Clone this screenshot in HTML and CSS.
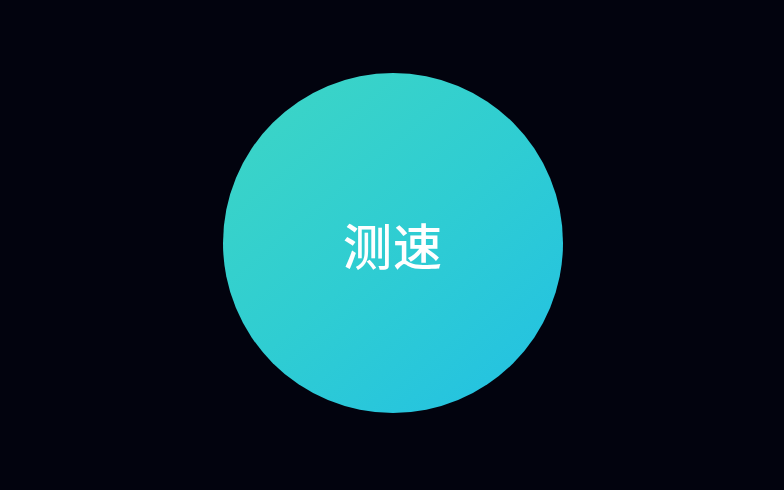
FILE: index.html
```html
<!DOCTYPE html>
<html lang="zh">
<head>
<meta charset="utf-8">
<title>测速</title>
<link rel="stylesheet" href="styles.css">
</head>
<body>
<main class="stage">
  <button class="speed-btn" type="button">测速</button>
</main>
</body>
</html>
```

FILE: styles.css
```css
html, body {
  margin: 0;
  padding: 0;
  background: #02030e;
}
.stage {
  width: 784px;
  height: 490px;
  display: flex;
  align-items: center;
  justify-content: center;
  padding: 0 0 4px 2px;
  box-sizing: border-box;
}
.speed-btn {
  width: 340px;
  height: 340px;
  border: none;
  border-radius: 50%;
  background: linear-gradient(140deg, #3ed6c4 0%, #2fcdd2 50%, #22c0e4 100%);
  color: #ffffff;
  font-family: "Noto Sans CJK SC", "Noto Sans", sans-serif;
  font-size: 49px;
  font-weight: 500;
  letter-spacing: 1px;
  display: flex;
  align-items: center;
  justify-content: center;
  padding: 0;
  cursor: pointer;
}
```
